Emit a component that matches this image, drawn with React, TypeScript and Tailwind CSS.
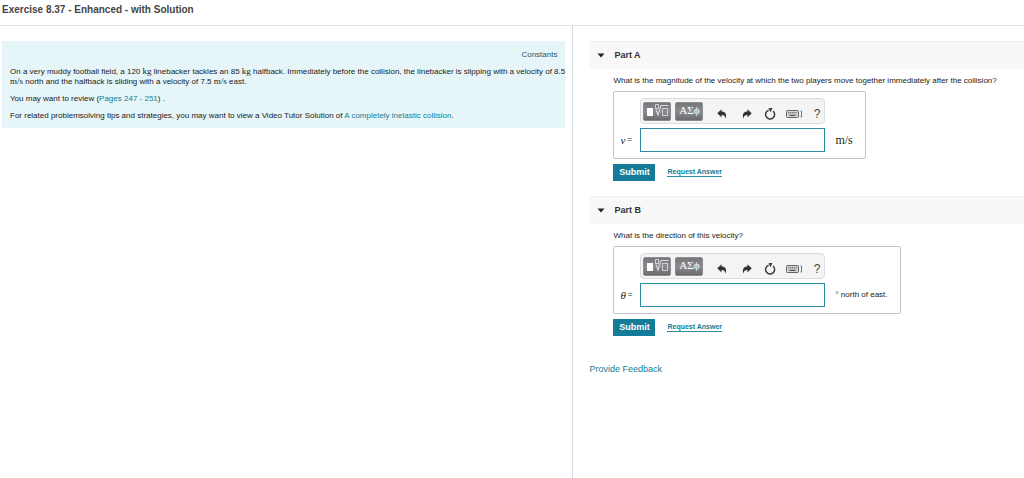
import { useState } from 'react';
import type { ReactNode } from 'react';

interface PartProps {
  id: string;
  title: string;
  question: string;
  symbol: string;
  units: ReactNode;
}

function Unit({ children }: { children: ReactNode }) {
  return <span className="font-['Liberation_Serif',serif] text-[9px] leading-none">{children}</span>;
}

function TemplatesIcon() {
  return (
    <svg viewBox="0 0 24 16" className="w-6 h-4" fill="none">
      <rect x="2" y="5" width="6" height="8" fill="#fff" />
      <rect x="10.5" y="1.500" width="3" height="4" stroke="#cfcfd2" />
      <path d="M11 6.500 13 12l3-9.500h7.500" stroke="#dadadc" strokeWidth="1.100" />
      <rect x="17.500" y="5.500" width="5" height="7" stroke="#cfcfd2" />
    </svg>
  );
}

function ArrowIcon({ flip = false }: { flip?: boolean }) {
  return (
    <svg viewBox="0 0 10 10" className={flip ? 'w-[10px] h-[10px] -scale-x-100' : 'w-[10px] h-[10px]'} fill="#333">
      <path d="M.3 4.300 4.500.3v2.300C8 2.500 10 4.900 8.700 9.700 8.200 7.200 7 6.100 4.500 6.100v2.300z" />
    </svg>
  );
}

function ResetIcon() {
  return (
    <svg viewBox="0 0 12 12" className="w-3 h-3" fill="none">
      <path d="M9 3a4.500 4.500 0 1 1-4.300-.8" stroke="#3c3c3c" strokeWidth="1.500" />
      <path d="M4.500 0H8.500L6.500 4.200z" fill="#3c3c3c" />
    </svg>
  );
}

function KeyboardIcon() {
  return (
    <svg viewBox="0 0 17 8" className="w-[17px] h-2" fill="none">
      <rect x=".5" y=".5" width="12" height="7" rx=".8" fill="#d6d6d6" stroke="#666" />
      <path d="M2 2.500h9M2.500 4h8" stroke="#777" strokeDasharray="1.200 .7" />
      <path d="M3.500 5.500h6" stroke="#555" />
      <path d="M14.500 1h1v6h-1" stroke="#666" strokeWidth=".9" />
    </svg>
  );
}

const paletteButton =
  'flex w-7 h-[19px] items-center justify-center rounded-xs border border-[#8c8c8f] bg-linear-to-b from-[#77777b] via-[#8c8c90] to-[#6b6b6f]';

function Toolbar() {
  return (
    <div className="flex h-[26px] items-center rounded border border-[#dcdcdc] bg-[#f4f4f4] pl-[2px]">
      <button type="button" aria-label="Templates" className={paletteButton}>
        <TemplatesIcon />
      </button>
      <button
        type="button"
        aria-label="Symbols"
        className={`${paletteButton} ml-1 pb-[2px] font-['Liberation_Serif',serif] text-[11px] leading-none text-white`}
      >
        ΑΣϕ
      </button>
      <div className="flex flex-1 items-center justify-between pt-[5px] pl-[14px] pr-[4px]">
        <button type="button" aria-label="Undo"><ArrowIcon /></button>
        <button type="button" aria-label="Redo" className="ml-1"><ArrowIcon flip /></button>
        <button type="button" aria-label="Reset" className="ml-[2px]"><ResetIcon /></button>
        <button type="button" aria-label="Keyboard shortcuts"><KeyboardIcon /></button>
        <button type="button" aria-label="Help" className="text-[12px] leading-3 text-[#444]">?</button>
      </div>
    </div>
  );
}

function Part({ id, title, question, symbol, units }: PartProps) {
  const [open, setOpen] = useState(true);
  const [answer, setAnswer] = useState('');

  return (
    <section>
      <h2>
        <button
          type="button"
          aria-expanded={open}
          onClick={() => setOpen(!open)}
          className="flex h-7 w-full items-center border-t border-[#f1f1f1] bg-[#f8f8f8] pl-2 text-[9px] font-bold text-[#333]"
        >
          <svg viewBox="0 0 8 5" className="mr-[9px] w-2 h-[5px]" fill="#222">
            <path d="M.5.5h7L4 4.500z" />
          </svg>
          {title}
        </button>
      </h2>
      {open && (
        <div className="flex flex-col items-start pt-[7px] pl-6">
          <p className="leading-[10px]">{question}</p>
          <div className="mt-[5px] flex items-end rounded-xs border border-[#c4c4c4] py-[6px] pr-3 pl-[6px]">
            <label htmlFor={id} className="flex h-6 w-5 items-center gap-[2px]">
              <i className="font-['Liberation_Serif',serif] text-[11px]">{symbol}</i> =
            </label>
            <div className="flex w-[185px] flex-col gap-1">
              <Toolbar />
              <input
                id={id}
                type="text"
                value={answer}
                onChange={(e) => setAnswer(e.target.value)}
                className="h-6 w-full border border-[#2f8aa3] bg-white px-1 outline-none"
              />
            </div>
            <div className="ml-[10px] flex h-6 items-center whitespace-pre">{units}</div>
          </div>
          <div className="mt-[5px] flex items-center gap-3">
            <button type="button" className="h-[17px] w-[42px] bg-[#147c98] text-[9px] font-bold text-white">
              Submit
            </button>
            <a href="#" className="border-b border-[#2f8aa3] text-[7px] leading-[8px] font-bold text-[#147c98]">
              Request Answer
            </a>
          </div>
        </div>
      )}
    </section>
  );
}

function App() {
  return (
    <div className="flex min-h-screen flex-col bg-white font-['Liberation_Sans',Arial,sans-serif] text-[8px] text-[#222]">
      <header className="flex h-[26px] items-start border-b border-[#e3e3e3] pt-1 pl-[2px]">
        <h1 className="text-[10px] leading-3 font-bold text-[#444]">Exercise 8.37 - Enhanced - with Solution</h1>
      </header>
      <div className="flex flex-1">
        <main className="w-[56%] border-r border-[#d5dbe2] pt-[15px] pr-[7px] pl-[2px]">
          <div className="flex flex-col gap-[7px] bg-[#e6f5f7] pt-[9px] pb-[7px] pl-2 leading-[10px]">
            <a href="#" className="mr-2 self-end text-[#1b566b]">Constants</a>
            <p>
              On a very muddy football field, a 120 <Unit>kg</Unit> linebacker tackles an 85 <Unit>kg</Unit> halfback.
              Immediately before the collision, the linebacker is slipping with a velocity of 8.5 <Unit>m/s</Unit> north
              and the halfback is sliding with a velocity of 7.5 <Unit>m/s</Unit> east.
            </p>
            <p>
              You may want to review (<a href="#" className="text-[#147c98]">Pages 247 - 251</a>) .
            </p>
            <p>
              For related problemsolving tips and strategies, you may want to view a Video Tutor Solution of{' '}
              <a href="#" className="text-[#147c98]">A completely inelastic collision</a>.
            </p>
          </div>
        </main>
        <aside className="flex flex-1 flex-col gap-[15px] pt-[15px] pl-4">
          <Part
            id="part-a"
            title="Part A"
            question="What is the magnitude of the velocity at which the two players move together immediately after the collision?"
            symbol="v"
            units={<span className="font-['Liberation_Serif',serif] text-[12px]">m/s</span>}
          />
          <Part
            id="part-b"
            title="Part B"
            question="What is the direction of this velocity?"
            symbol="θ"
            units="° north of east."
          />
          <a href="#" className="mt-3 self-start text-[9px] leading-3 text-[#147c98]">Provide Feedback</a>
        </aside>
      </div>
    </div>
  );
}

export default App;
